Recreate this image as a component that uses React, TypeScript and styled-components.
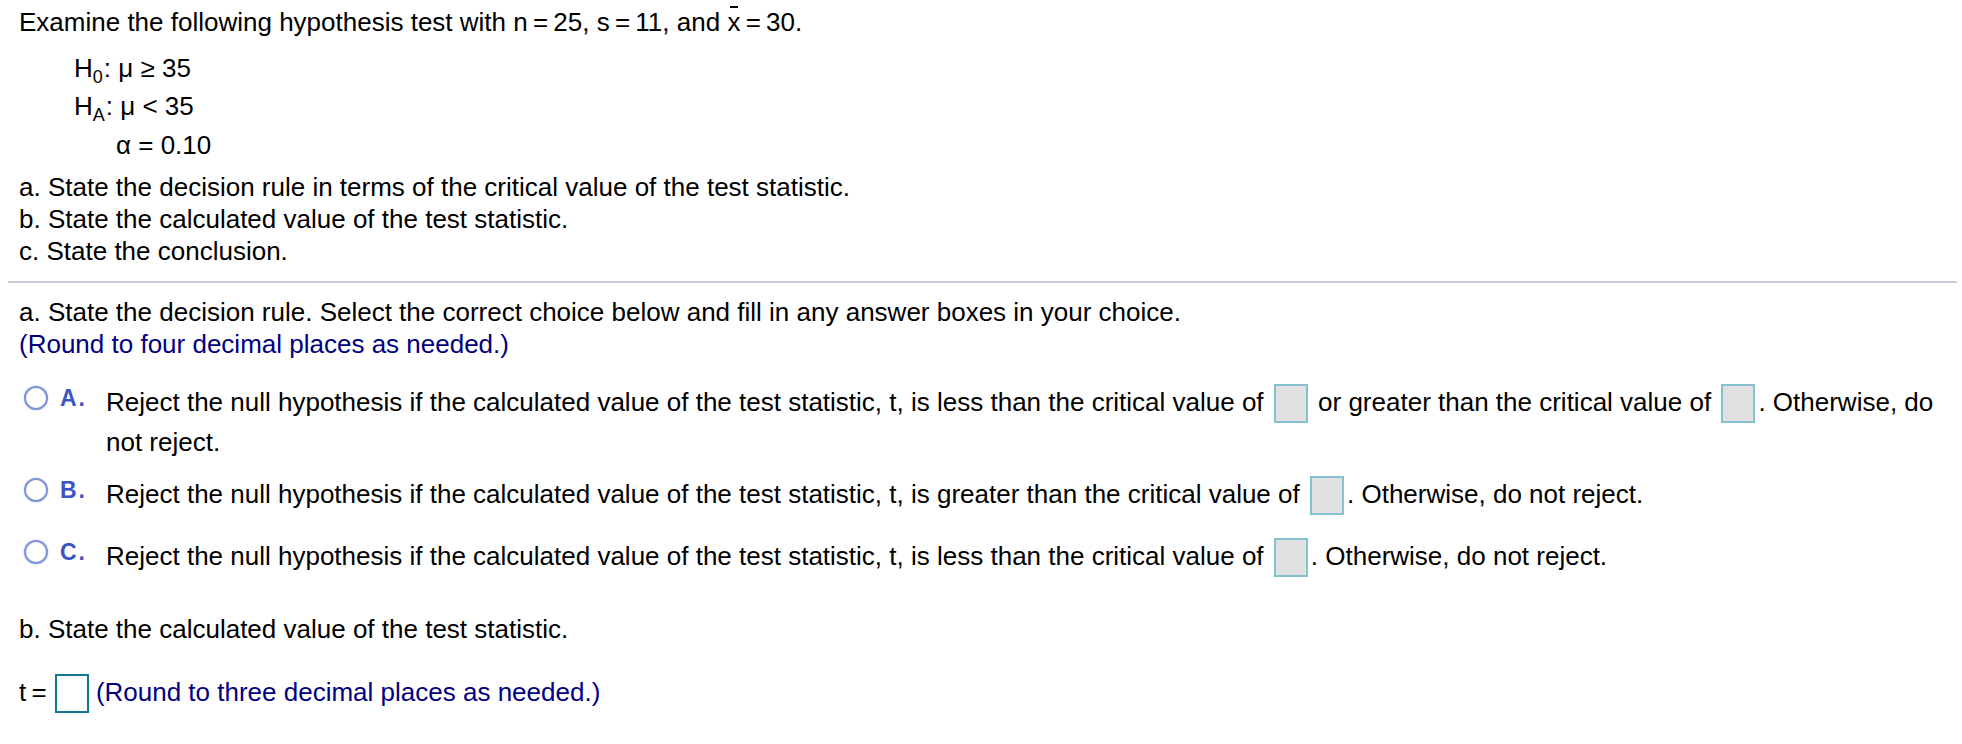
import React from "react";
import styled, { createGlobalStyle } from "styled-components";

const GlobalStyle = createGlobalStyle`
  body {
    margin: 0;
    background: #fff;
    font-family: "Liberation Sans", Arial, Helvetica, sans-serif;
    font-size: 26px;
    color: #000;
  }
`;

const Page = styled.div`
  padding: 5px 5px 30px 8px;
`;

const Block = styled.div<{ $mt?: number }>`
  padding-left: 11px;
  margin-top: ${p => p.$mt ?? 0}px;
`;

const Line = styled.div<{ $h?: number; $indent?: number; $mt?: number }>`
  line-height: ${p => p.$h ?? 32}px;
  padding-left: ${p => p.$indent ?? 0}px;
  margin-top: ${p => p.$mt ?? 0}px;
  white-space: nowrap;
`;

const Sub = styled.span`
  font-size: 18px;
  position: relative;
  top: 6px;
  margin-right: 1px;
`;

const XBar = styled.span`
  position: relative;
  &::before {
    content: "";
    position: absolute;
    left: 3px;
    width: 8px;
    top: -1px;
    height: 2px;
    background: #000;
  }
`;

const Hint = styled.span`
  color: #000080;
`;

const Divider = styled.hr`
  border: none;
  height: 2px;
  background: #c8ccd9;
  margin: 14px 0 0 0;
`;

const Choices = styled.div`
  display: flex;
  flex-direction: column;
`;

const Option = styled.div<{ $mt: number }>`
  display: flex;
  align-items: flex-start;
  padding-left: 16px;
  margin-top: ${p => p.$mt}px;
`;

const Radio = styled.span`
  flex: none;
  box-sizing: border-box;
  width: 24px;
  height: 24px;
  margin-top: 3px;
  border-radius: 50%;
  border: 2px solid #7e92d8;
  box-shadow: 0 0 2px rgba(126, 146, 216, 0.6);
  background: #fff;
`;

const Letter = styled.span`
  flex: none;
  width: 46px;
  margin-left: 12px;
  margin-top: 1px;
  font-size: 23px;
  font-weight: bold;
  letter-spacing: 2px;
  line-height: 28px;
  color: #3b55c4;
`;

const ChoiceText = styled.div`
  flex: 1;
  line-height: 38px;
`;

const AnswerBox = styled.span`
  display: inline-block;
  box-sizing: border-box;
  width: 34px;
  height: 39px;
  margin: 0 3px;
  vertical-align: -12px;
  border: 2px solid #86c1d0;
  background: #e1e1e1;
`;

const ActiveBox = styled(AnswerBox)`
  margin: 0 0 0 8px;
  border-color: #137896;
  background: #fff;
`;

const T = "\u2009";

export default function App() {
  return (
    <Page>
      <GlobalStyle />
      <Block>
        <Line $h={35}>
          Examine the following hypothesis test with n{T}={T}25, s{T}={T}11, and{" "}
          <XBar>x</XBar>
          {T}={T}30.
        </Line>
        <Line $h={35} $indent={55} $mt={11}>
          H<Sub>0</Sub>: μ ≥ 35
        </Line>
        <Line $h={35} $indent={55}>
          H<Sub>A</Sub>: μ &lt; 35
        </Line>
        <Line $h={35} $indent={97} $mt={1}>
          α = 0.10
        </Line>
        <Line $mt={8}>a. State the decision rule in terms of the critical value of the test statistic.</Line>
        <Line>b. State the calculated value of the test statistic.</Line>
        <Line>c. State the conclusion.</Line>
      </Block>
      <Divider />
      <Block $mt={13}>
        <Line>a. State the decision rule. Select the correct choice below and fill in any answer boxes in your choice.</Line>
        <Line>
          <Hint>(Round to four decimal places as needed.)</Hint>
        </Line>
      </Block>
      <Choices>
        <Option $mt={23}>
          <Radio />
          <Letter>A.</Letter>
          <ChoiceText>
            Reject the null hypothesis if the calculated value of the test statistic, t, is less than the critical value of{" "}
            <AnswerBox /> or greater than the critical value of <AnswerBox />. Otherwise, do not reject.
          </ChoiceText>
        </Option>
        <Option $mt={14}>
          <Radio />
          <Letter>B.</Letter>
          <ChoiceText>
            Reject the null hypothesis if the calculated value of the test statistic, t, is greater than the critical value of{" "}
            <AnswerBox />. Otherwise, do not reject.
          </ChoiceText>
        </Option>
        <Option $mt={22}>
          <Radio />
          <Letter>C.</Letter>
          <ChoiceText>
            Reject the null hypothesis if the calculated value of the test statistic, t, is less than the critical value of{" "}
            <AnswerBox />. Otherwise, do not reject.
          </ChoiceText>
        </Option>
      </Choices>
      <Block $mt={36}>
        <Line>b. State the calculated value of the test statistic.</Line>
        <Line $h={38} $mt={28}>
          t{T}=<ActiveBox /> <Hint>(Round to three decimal places as needed.)</Hint>
        </Line>
      </Block>
    </Page>
  );
}
